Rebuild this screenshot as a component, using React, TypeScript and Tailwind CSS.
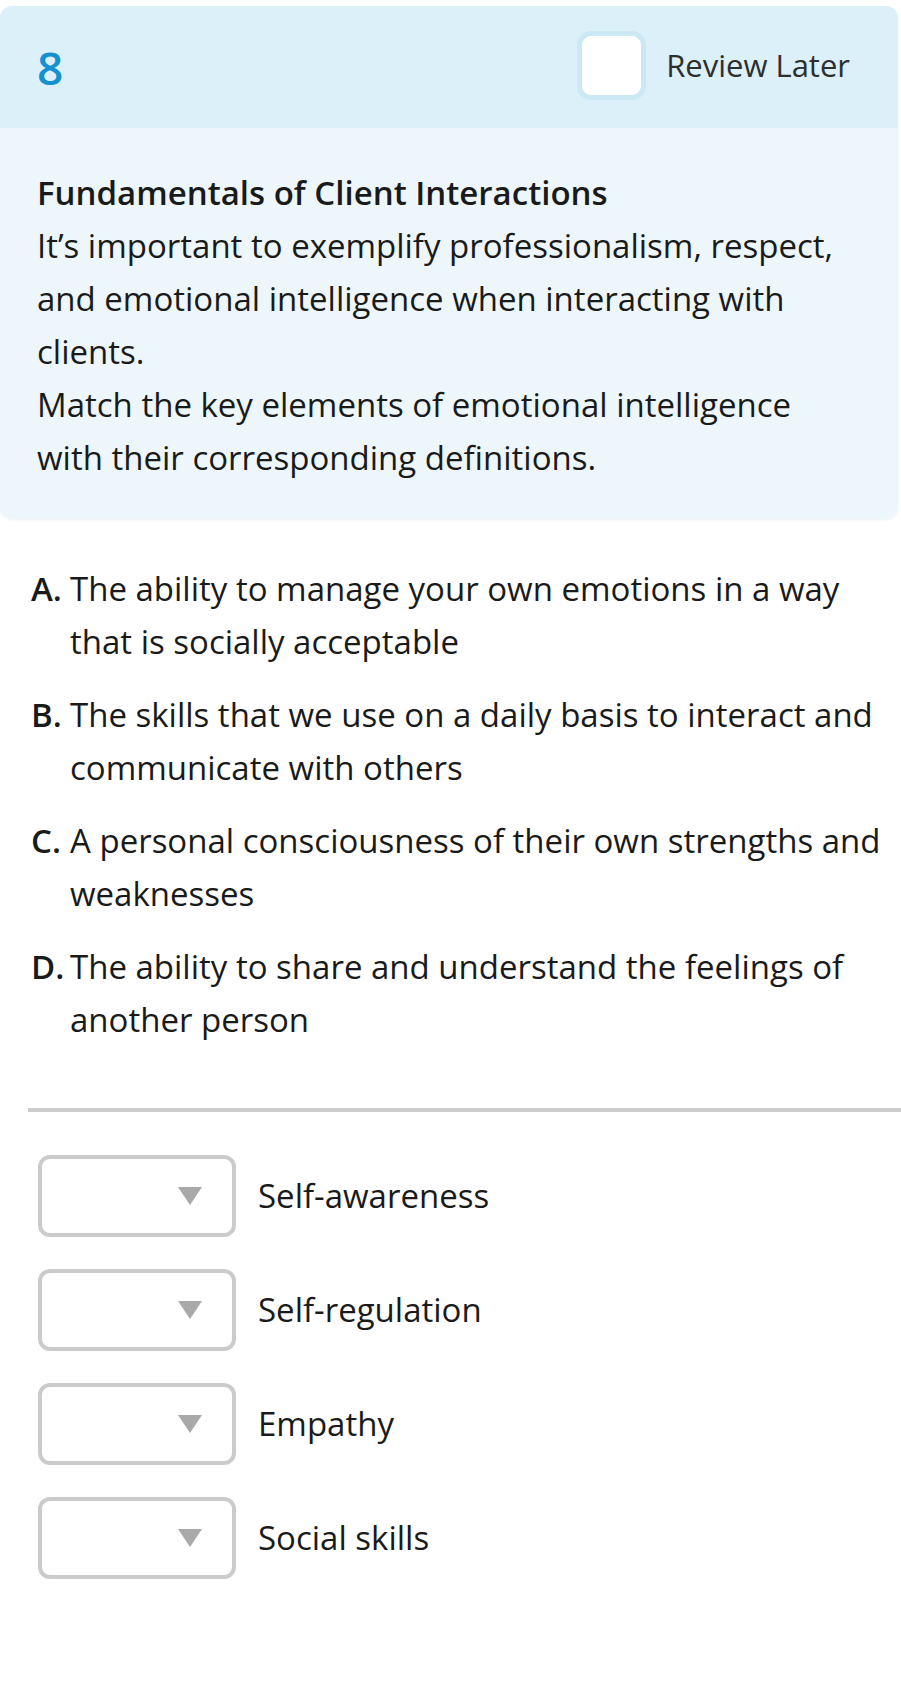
import React from 'react';

const options = [
  { letter: 'A.', text: 'The ability to manage your own emotions in a way that is socially acceptable' },
  { letter: 'B.', text: 'The skills that we use on a daily basis to interact and communicate with others' },
  { letter: 'C.', text: 'A personal consciousness of their own strengths and weaknesses' },
  { letter: 'D.', text: 'The ability to share and understand the feelings of another person' },
];

const terms = ['Self-awareness', 'Self-regulation', 'Empathy', 'Social skills'];

const Dropdown: React.FC = () => (
  <div className="w-[198px] h-[82px] shrink-0 rounded-[12px] border-[4px] border-[#cbcbcb] bg-white flex items-center justify-end pr-[30px]">
    <svg width="24" height="18" viewBox="0 0 24 18">
      <path d="M0 0 H24 L12 18 Z" fill="#a9a9a9" />
    </svg>
  </div>
);

export default function App() {
  return (
    <div className="min-h-[1681px] w-[901px] bg-white pt-[6px] text-[#1a1a1a] font-['Open_Sans',sans-serif]">
      {/* Question card */}
      <div className="w-[898px] rounded-[12px] overflow-hidden shadow-[0_1px_3px_rgba(0,0,0,0.06)]">
        <div className="h-[122px] bg-[#dcf0f9] flex items-center justify-between pl-[37px] pr-[48px]">
          <span className="text-[46px] leading-none font-semibold text-[#1591d0]">8</span>
          <label className="flex items-center gap-[20px] -mt-[4px]">
            <span className="w-[69px] h-[69px] rounded-[14px] border-[5px] border-[#cde8f5] bg-white" />
            <span className="text-[31px] text-[#2e2e2e]">Review Later</span>
          </label>
        </div>
        <div className="bg-[#edf6fb] pl-[37px] pr-[40px] pt-[38px] pb-[35px] text-[33px] leading-[53px]">
          <p className="font-semibold">Fundamentals of Client Interactions</p>
          <p>It’s important to exemplify professionalism, respect, and emotional intelligence when interacting with clients.</p>
          <p>Match the key elements of emotional intelligence with their corresponding definitions.</p>
        </div>
      </div>

      {/* Definitions */}
      <div className="mt-[43px] flex flex-col gap-[20px] text-[33px] leading-[53px]">
        {options.map((o) => (
          <div key={o.letter} className="flex pl-[31px]">
            <span className="w-[39px] shrink-0 font-semibold">{o.letter}</span>
            <span className="pr-[8px]">{o.text}</span>
          </div>
        ))}
      </div>

      <div className="mt-[62px] ml-[28px] h-[4px] bg-[#cccccc]" />

      {/* Matching */}
      <div className="mt-[43px] pl-[38px] flex flex-col gap-[32px]">
        {terms.map((t) => (
          <div key={t} className="flex items-center gap-[22px]">
            <Dropdown />
            <span className="text-[33px]">{t}</span>
          </div>
        ))}
      </div>
    </div>
  );
}
